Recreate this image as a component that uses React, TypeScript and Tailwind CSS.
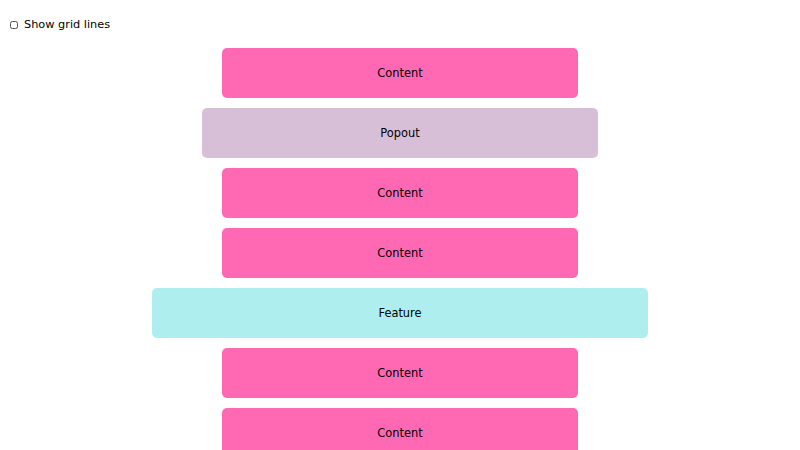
import * as React from 'react';

type Row = { label: string; kind: 'content' | 'popout' | 'feature' };

const rows: Row[] = [
  { label: 'Content', kind: 'content' },
  { label: 'Popout', kind: 'popout' },
  { label: 'Content', kind: 'content' },
  { label: 'Content', kind: 'content' },
  { label: 'Feature', kind: 'feature' },
  { label: 'Content', kind: 'content' },
  { label: 'Content', kind: 'content' },
];

const kindClass: Record<Row['kind'], string> = {
  content: 'w-[356px] bg-[#ff69b4]',
  popout: 'w-[396px] bg-[#d8bfd8]',
  feature: 'w-[496px] bg-[#afeeee]',
};

export default function App() {
  const [showGrid, setShowGrid] = React.useState(false);

  return (
    <div
      className="min-h-[450px] bg-white text-black"
      style={{ fontFamily: '"DejaVu Sans", sans-serif' }}
    >
      <label className="flex items-center gap-[6px] pl-[10px] pt-[17px] text-[11.3px] leading-[16px]">
        <input
          type="checkbox"
          className="m-0 h-[8px] w-[8px]"
          checked={showGrid}
          onChange={(e) => setShowGrid(e.target.checked)}
        />
        Show grid lines
      </label>

      <div className="mt-[15px] flex flex-col items-center gap-[10px]">
        {rows.map((r, i) => (
          <div
            key={i}
            className={`flex h-[50px] items-center justify-center rounded-[5px] pt-[2px] text-[11.4px] ${kindClass[r.kind]} ${
              showGrid ? 'outline outline-1 outline-dashed outline-gray-500' : ''
            }`}
          >
            {r.label}
          </div>
        ))}
      </div>
    </div>
  );
}
